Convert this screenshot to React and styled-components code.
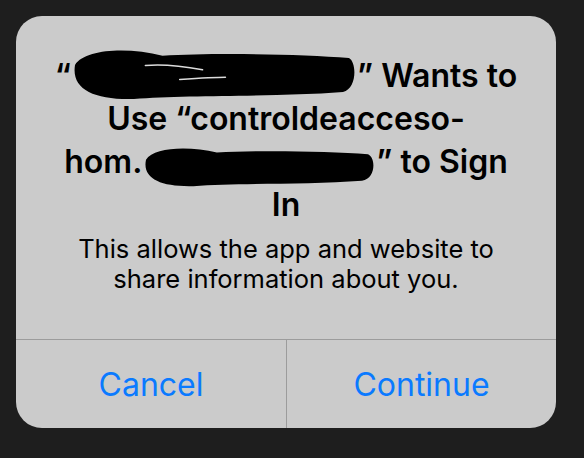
import styled, { createGlobalStyle } from "styled-components";

const GlobalStyle = createGlobalStyle`
  html, body {
    margin: 0;
    padding: 0;
    background: #1e1e1e;
  }
  body {
    font-family: Inter, "Liberation Sans", sans-serif;
    -webkit-font-smoothing: antialiased;
  }
`;

function App() {
  return (
    <Screen>
      <GlobalStyle />
      <Alert>
        <Content>
          <Title>
            “<Redact $w={286} $h={54} $shift={-5} $shine />” Wants to
            <br />
            Use “controldeacceso-
            <br />
            hom.<Redact $w={234} $h={42} $shift={2} />” to Sign
            <br />
            In
          </Title>
          <Message>
            This allows the app and website to
            <br />
            share information about you.
          </Message>
        </Content>
        <Actions>
          <ActionButton>Cancel</ActionButton>
          <ActionButton>Continue</ActionButton>
        </Actions>
      </Alert>
    </Screen>
  );
}

// black marker scribble hiding part of the text
function Redact({ $w, $h, $shift, $shine }) {
  const w = $w;
  const h = $h;
  return (
    <Scribble $w={w} $h={h} $shift={$shift}>
      <svg width={w} height={h} viewBox={`0 0 ${w} ${h}`}>
        <path
          d={`M4 ${h * 0.35}
              C ${w * 0.05} ${h * 0.05}, ${w * 0.2} ${h * 0.02}, ${w * 0.32} ${h * 0.18}
              C ${w * 0.5} ${h * 0.12}, ${w * 0.8} ${h * 0.15}, ${w - 8} ${h * 0.22}
              C ${w} ${h * 0.3}, ${w} ${h * 0.8}, ${w - 14} ${h * 0.85}
              C ${w * 0.7} ${h * 0.95}, ${w * 0.4} ${h * 0.9}, ${w * 0.22} ${h * 0.98}
              C ${w * 0.08} ${h}, 0 ${h * 0.8}, 4 ${h * 0.35} Z`}
          fill="#000"
        />
        {$shine && (
          <path
            d={`M${w * 0.26} ${h * 0.36} C ${w * 0.32} ${h * 0.33}, ${w * 0.4} ${h * 0.38}, ${w * 0.46} ${h * 0.44}
                M${w * 0.38} ${h * 0.62} C ${w * 0.44} ${h * 0.6}, ${w * 0.5} ${h * 0.58}, ${w * 0.54} ${h * 0.58}`}
            stroke="#dcdcdc"
            strokeWidth="1.5"
            fill="none"
            strokeLinecap="round"
          />
        )}
      </svg>
    </Scribble>
  );
}

const Screen = styled.div`
  width: 584px;
  height: 458px;
  padding: 16px 28px 30px 16px;
  box-sizing: border-box;
`;

const Alert = styled.div`
  width: 540px;
  height: 412px;
  background: #cbcbcb;
  border-radius: 26px;
  overflow: hidden;
  display: flex;
  flex-direction: column;
`;

const Content = styled.div`
  flex: 1;
  padding: 38px 10px 0;
  text-align: center;
  color: #000;
`;

const Title = styled.div`
  font-size: 32px;
  font-weight: 600;
  line-height: 43px;
  white-space: nowrap;
`;

const Scribble = styled.span`
  display: inline-block;
  width: ${(p) => p.$w}px;
  height: ${(p) => p.$h}px;
  margin: -10px 0;
  vertical-align: middle;
  position: relative;
  top: ${(p) => p.$shift}px;
  svg {
    display: block;
  }
`;

const Message = styled.div`
  margin-top: 8px;
  font-size: 25.5px;
  font-weight: 400;
  line-height: 30px;
  white-space: nowrap;
`;

const Actions = styled.div`
  height: 88px;
  border-top: 1px solid #9c9c9c;
  display: grid;
  grid-template-columns: 270px 1fr;
`;

const ActionButton = styled.button`
  border: none;
  background: transparent;
  color: #0a7aff;
  font-family: Inter, "Liberation Sans", sans-serif;
  font-size: 32px;
  padding: 0;
  & + & {
    border-left: 1px solid #9c9c9c;
  }
`;

export default App;
